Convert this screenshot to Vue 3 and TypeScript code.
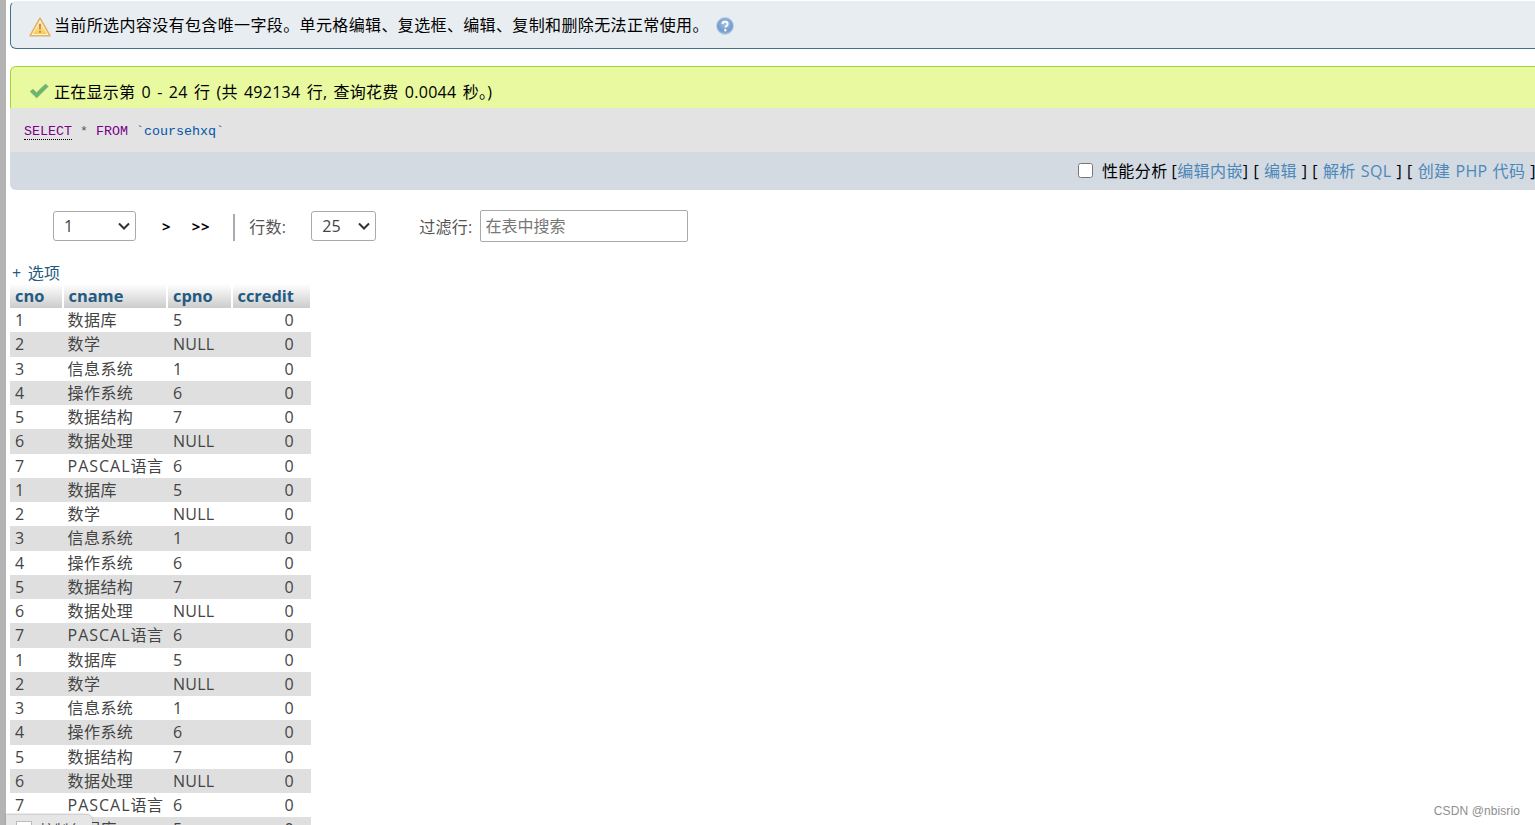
<script setup lang="ts">
interface Course { cno: number; cname: string; cpno: string; latin?: string }
const base: Course[] = [
  { cno: 1, cname: '数据库', cpno: '5' },
  { cno: 2, cname: '数学', cpno: 'NULL' },
  { cno: 3, cname: '信息系统', cpno: '1' },
  { cno: 4, cname: '操作系统', cpno: '6' },
  { cno: 5, cname: '数据结构', cpno: '7' },
  { cno: 6, cname: '数据处理', cpno: 'NULL' },
  { cno: 7, cname: '语言', cpno: '6', latin: 'PASCAL' },
]
const rows: Course[] = [...base, ...base, ...base, base[0], base[1], base[2], base[3]]
const columns = ['cno', 'cname', 'cpno', 'ccredit']
</script>

<template>
  <div class="page">
    <div class="alert notice">
      <svg class="ico warn-ico" width="22" height="20" viewBox="0 0 22 20">
        <defs>
          <linearGradient id="warn" x1="0" y1="0" x2="0" y2="1">
            <stop offset="0" stop-color="#fdeeb8" />
            <stop offset="1" stop-color="#f6c95a" />
          </linearGradient>
        </defs>
        <path d="M11 1.2 21 18.8H1Z" fill="#fff6d8" stroke="#e3b163" stroke-width="1.6" stroke-linejoin="round" />
        <path d="M11 4.6 18 17H4Z" fill="url(#warn)" />
        <path d="M10 6.8h2l-.4 6h-1.2Z" fill="#c08a35" />
        <circle cx="11" cy="14.8" r="1.1" fill="#c08a35" />
      </svg>
      <span>当前所选内容没有包含唯一字段。单元格编辑、复选框、编辑、复制和删除无法正常使用。</span>
      <svg class="help" width="18" height="18" viewBox="0 0 18 18">
        <defs>
          <radialGradient id="hb" cx="0.5" cy="0.35" r="0.7">
            <stop offset="0" stop-color="#a9c4e4" />
            <stop offset="0.65" stop-color="#6f9bce" />
            <stop offset="1" stop-color="#a9c3df" />
          </radialGradient>
        </defs>
        <circle cx="9" cy="9" r="8.5" fill="url(#hb)" stroke="#c3d3e6" />
        <path d="M6.5 7c0-3.2 5.2-3.2 5.2 0 0 2-2.4 1.9-2.4 3.6" fill="none" stroke="#fff" stroke-width="1.8" />
        <circle cx="9.3" cy="13.3" r="1.2" fill="#fff" />
      </svg>
    </div>

    <div class="result">
      <div class="alert success">
        <svg class="ico" width="20" height="16" viewBox="0 0 20 16">
          <path d="M1 8.5 4 6l3.5 3.6L16.5 1 19.3 3.4 7.7 15Z" fill="#6db36b" stroke="#8fc48b" stroke-width="0.8" stroke-linejoin="round" />
        </svg>
        <span>正在显示第 0 - 24 行 (共 492134 行, 查询花费 0.0044 秒。)</span>
      </div>
      <div class="sql">
        <span class="kw under">SELECT</span> <span class="star">*</span> <span class="kw">FROM</span> <span class="tick">`coursehxq`</span>
      </div>
      <div class="tools">
        <input class="check" type="checkbox" />
        <span class="prof">性能分析</span>
        <span class="lnk">[<a>编辑内嵌</a>] [ <a>编辑</a> ] [ <a>解析 SQL</a> ] [ <a>创建 PHP 代码</a> ]</span>
      </div>
    </div>

    <div class="nav">
      <select class="sel page-sel"><option>1</option></select>
      <span class="step one">&gt;</span>
      <span class="step two">&gt;&gt;</span>
      <span class="sep"></span>
      <label class="lab rows-lab">行数:</label>
      <select class="sel size-sel"><option>25</option></select>
      <label class="lab filter-lab">过滤行:</label>
      <input class="search" type="text" placeholder="在表中搜索" />
    </div>

    <div class="options">+ 选项</div>

    <div class="grid">
      <div class="head">
        <div v-for="c in columns" :key="c" class="th">{{ c }}</div>
      </div>
      <div v-for="(r, i) in rows" :key="i" class="row" :class="{ odd: i % 2 === 1 }">
        <div class="td">{{ r.cno }}</div>
        <div class="td name"><span v-if="r.latin" class="wide">{{ r.latin }}</span>{{ r.cname }}</div>
        <div class="td">{{ r.cpno }}</div>
        <div class="td num">0</div>
      </div>
    </div>

    <div class="console"><span class="box"></span><span>控制台</span></div>
    <div class="mark">CSDN @nbisrio</div>
  </div>
</template>

<style>
html, body { margin: 0; height: 100%; overflow: hidden; background: #fff; }
</style>

<style scoped>
.page {
  position: relative;
  height: 825px;
  overflow: hidden;
  box-sizing: border-box;
  padding: 1px 0 0 10px;
  font-family: "Open Sans", "Noto Sans CJK SC", sans-serif;
  font-size: 16px;
  letter-spacing: 0.27px;
  word-spacing: 1.8px;
  color: #444;
}
.page::before {
  content: "";
  position: absolute;
  left: 0;
  top: 0;
  bottom: 0;
  width: 6px;
  background: #b3b3b3;
}
.alert {
  display: flex;
  align-items: center;
  margin-right: -20px;
  box-sizing: border-box;
  color: #000;
  white-space: nowrap;
}
.notice {
  height: 48px;
  padding: 0 0 3px 18px;
  background: #e8edf1;
  border: 1px solid #3f7290;
  border-top-color: #e8edf1;
  border-radius: 6px;
  letter-spacing: 0.37px;
}
.ico { flex: none; margin-right: 4px; }
.warn-ico { margin-top: 7px; margin-right: 3px; }
.help { margin-left: 7px; margin-top: 5px; }
.result { margin-top: 17px; margin-right: -20px; }
.success {
  height: 42px;
  margin-right: 0;
  padding: 6px 0 0 18px;
  background: #e9f99f;
  border: 1px solid #a3d53a;
  border-bottom: 0;
  border-radius: 6px 6px 0 0;
}
.success .ico { margin-right: 5px; }
.sql {
  height: 44px;
  box-sizing: border-box;
  padding: 15px 0 0 14px;
  background: #e3e3e3;
  font-family: "Liberation Mono", "DejaVu Sans Mono", monospace;
  font-size: 13.33px;
  letter-spacing: 0;
  word-spacing: 0;
  line-height: 18px;
  white-space: pre;
}
.kw { color: #770088; }
.under { border-bottom: 1px dotted #000; }
.star { color: #555; }
.tick { color: #05a; }
.tools {
  display: flex;
  align-items: center;
  justify-content: flex-end;
  height: 38px;
  box-sizing: border-box;
  padding: 0 19px 2px 0;
  background: #d3dae2;
  border-radius: 0 0 0 6px;
  color: #000;
  white-space: nowrap;
  letter-spacing: 0.4px;
  word-spacing: 0.4px;
}
.check { width: 15px; height: 15px; margin: 0 9px 0 0; }
.prof { margin-right: 4px; }
.lnk a { color: #4c88b8; }
.nav {
  display: flex;
  align-items: center;
  height: 32px;
  margin-top: 20px;
  padding-left: 43px;
}
.sel {
  box-sizing: border-box;
  height: 30px;
  padding: 0 10px;
  appearance: none;
  background: #fff url("data:image/svg+xml,%3Csvg xmlns='http://www.w3.org/2000/svg' width='12' height='8'%3E%3Cpath d='M1 1.5 6 6.5 11 1.5' fill='none' stroke='%23333' stroke-width='2'/%3E%3C/svg%3E") no-repeat right 5px center;
  border: 1px solid #aaa;
  border-radius: 3px;
  color: #444;
  font: inherit;
}
.page-sel { width: 83px; }
.size-sel { width: 65px; }
.step { color: #000; font-weight: 700; font-size: 15px; }
.one { margin-left: 26px; }
.two { margin-left: 21px; letter-spacing: 0.6px; }
.sep { width: 2px; height: 27px; margin: 3px 0 0 23px; background: #a8adb3; }
.lab { color: #555; }
.rows-lab { margin-left: 14px; margin-right: 25px; }
.filter-lab { margin-left: 43px; margin-right: 7px; }
.search {
  box-sizing: border-box;
  width: 208px;
  height: 32px;
  padding: 0 5px;
  border: 1px solid #aaa;
  border-radius: 2px;
  color: #444;
  font: inherit;
}
.search::placeholder { color: #777; }
.options {
  margin-top: 21px;
  padding-left: 2px;
  height: 21px;
  line-height: 20px;
  font-size: 16px;
  word-spacing: 2px;
  color: #235a81;
}
.grid { width: 301px; }
.head, .row {
  display: grid;
  grid-template-columns: 53.5px 104.5px 64.5px 78.5px;
}
.head { height: 24px; }
.th {
  margin-right: 2px;
  padding-left: 5px;
  background: linear-gradient(#fff, #ccc);
  color: #235a81;
  font-weight: 700;
  font-size: 16.4px;
  letter-spacing: 0;
  line-height: 24px;
}
.th:last-child { margin-right: 1px; }
.row { height: 24.25px; line-height: 24px; }
.odd { background: #dfdfdf; }
.td { padding-left: 5px; white-space: nowrap; }
.name { padding-left: 4px; letter-spacing: 0.45px; }
.wide { letter-spacing: 1px; }
.num { text-align: right; padding-right: 17px; }
.console {
  position: absolute;
  left: 6px;
  top: 815px;
  display: flex;
  gap: 8px;
  width: 86px;
  height: 20px;
  box-sizing: border-box;
  padding: 6px 0 0 10px;
  background: #e6e6e6;
  border-radius: 0 5px 0 0;
  box-shadow: 0 -1px 2px rgba(0,0,0,0.25);
  font-size: 14px;
  line-height: 18px;
}
.box { width: 16px; height: 16px; background: #fff; border: 1px solid #bbb; box-sizing: border-box; }
.mark {
  position: absolute;
  right: 15px;
  top: 803px;
  font-family: "Liberation Sans", sans-serif;
  font-size: 12px;
  line-height: 16px;
  color: #8f8f8f;
  letter-spacing: 0.1px;
  word-spacing: 0;
}
</style>
